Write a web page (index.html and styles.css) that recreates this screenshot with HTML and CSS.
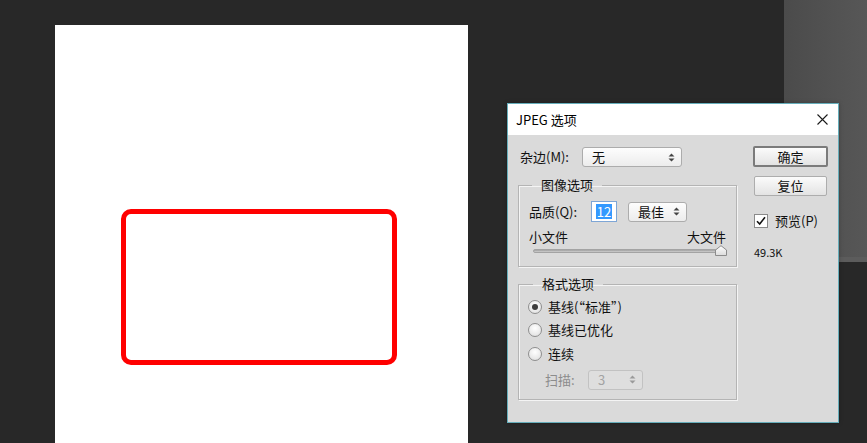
FILE: index.html
```html
<!DOCTYPE html>
<html lang="zh-CN">
<head>
    <meta charset="UTF-8">
    <meta name="viewport" content="width=device-width, initial-scale=1.0">
    <title>JPEG 选项</title>
    <link rel="stylesheet" href="styles.css">
</head>
<body>
    <div class="workspace">
        <div class="canvas">
            <div class="red-box"></div>
        </div>
        <div class="side-panel"></div>
    </div>

    <div class="dialog">
        <div class="titlebar">
            <span class="title">JPEG 选项</span>
            <svg class="close" width="11" height="11" viewBox="0 0 11 11">
                <path d="M0.5 0.5 L10.5 10.5 M10.5 0.5 L0.5 10.5" stroke="#1a1a1a" stroke-width="1.1" fill="none"/>
            </svg>
        </div>
        <div class="dialog-body">
            <div class="left-col">
                <div class="row matte-row">
                    <span class="label matte-label">杂边(M):</span>
                    <div class="select matte-select">
                        <span>无</span>
                        <svg class="arrows" width="7" height="9" viewBox="0 0 7 9">
                            <path d="M0.5 3.5 L3.5 0.5 L6.5 3.5 Z M0.5 5.5 L3.5 8.5 L6.5 5.5 Z" fill="#444"/>
                        </svg>
                    </div>
                </div>

                <fieldset class="group group-image">
                    <legend>图像选项</legend>
                    <div class="row quality-row">
                        <span class="label quality-label">品质(Q):</span>
                        <div class="num-input"><span class="selected">12</span></div>
                        <div class="select quality-select">
                            <span>最佳</span>
                            <svg class="arrows" width="7" height="9" viewBox="0 0 7 9">
                                <path d="M0.5 3.5 L3.5 0.5 L6.5 3.5 Z M0.5 5.5 L3.5 8.5 L6.5 5.5 Z" fill="#444"/>
                            </svg>
                        </div>
                    </div>
                    <div class="size-labels">
                        <span>小文件</span>
                        <span>大文件</span>
                    </div>
                    <div class="slider">
                        <div class="track"></div>
                        <svg class="thumb" width="12" height="11" viewBox="0 0 12 11">
                            <defs>
                                <linearGradient id="thumbFill" x1="0" y1="0" x2="0" y2="1">
                                    <stop offset="0" stop-color="#ffffff"/>
                                    <stop offset="1" stop-color="#dcdcdc"/>
                                </linearGradient>
                            </defs>
                            <path d="M0.5 10.5 V5 L6 0.7 L11.5 5 V10.5 Z" fill="url(#thumbFill)" stroke="#8c8c8c"/>
                        </svg>
                    </div>
                </fieldset>

                <fieldset class="group group-format">
                    <legend>格式选项</legend>
                    <div class="radio-row">
                        <span class="radio checked"></span>
                        <span>基线(“标准”)</span>
                    </div>
                    <div class="radio-row">
                        <span class="radio"></span>
                        <span>基线已优化</span>
                    </div>
                    <div class="radio-row">
                        <span class="radio"></span>
                        <span>连续</span>
                    </div>
                    <div class="row scan-row">
                        <span class="label scan-label">扫描:</span>
                        <div class="select scan-select">
                            <span>3</span>
                            <svg class="arrows" width="7" height="9" viewBox="0 0 7 9">
                                <path d="M0.5 3.5 L3.5 0.5 L6.5 3.5 Z M0.5 5.5 L3.5 8.5 L6.5 5.5 Z" fill="#9a9a9a"/>
                            </svg>
                        </div>
                    </div>
                </fieldset>
            </div>

            <div class="right-col">
                <button class="btn btn-default">确定</button>
                <button class="btn">复位</button>
                <div class="check-row">
                    <svg class="checkbox" width="14" height="14" viewBox="0 0 14 14">
                        <rect x="0.5" y="0.5" width="13" height="13" fill="#fff" stroke="#8a8a8a"/>
                        <path d="M3 7.2 L5.7 10 L11 3.2" stroke="#111" stroke-width="1.6" fill="none"/>
                    </svg>
                    <span>预览(P)</span>
                </div>
                <div class="file-size">49.3K</div>
            </div>
        </div>
    </div>
</body>
</html>
```

FILE: styles.css
```css
/* Basic reset */
* {
    box-sizing: border-box;
    margin: 0;
    padding: 0;
}

body {
    background: #282828;
    font-family: "Noto Sans CJK SC", "Noto Sans", sans-serif;
    font-size: 13px;
    color: #111;
    height: 443px;
    overflow: hidden;
}

/* Photoshop workspace */
.workspace {
    display: flex;
    align-items: flex-start;
    height: 443px;
    padding: 25px 0 0 55px;
}

.canvas {
    width: 413px;
    height: 418px;
    background: #fff;
    padding: 184px 0 0 66px;
}

.red-box {
    width: 276px;
    height: 156px;
    border: 5px solid #ff0000;
    border-radius: 10px;
}

.side-panel {
    margin-left: auto;
    margin-top: -25px;
    width: 83px;
    height: 262px;
    background: linear-gradient(to right, #4b4b4b, #575757);
    border-bottom: 5px solid #5c5c5c;
}

/* Dialog window */
.dialog {
    position: absolute;
    left: 507px;
    top: 103px;
    width: 332px;
    height: 320px;
    background: #dadada;
    border: 1px solid #66aebb;
    box-shadow: 0 0 4px rgba(0, 0, 0, 0.25);
}

.titlebar {
    height: 31px;
    background: #fff;
    display: flex;
    align-items: center;
    justify-content: space-between;
    padding: 0 10px 0 8px;
}

.title {
    font-size: 13px;
    color: #000;
}

.dialog-body {
    display: flex;
    padding-left: 10px;
}

.left-col {
    width: 219px;
}

.right-col {
    width: 75px;
    margin-left: 16px;
    display: flex;
    flex-direction: column;
}

.row {
    display: flex;
    align-items: center;
}

.label {
    line-height: 16px;
}

.matte-row {
    margin-top: 12px;
    padding-left: 2px;
}

.matte-label {
    width: 62px;
}

/* Dropdowns */
.select {
    height: 20px;
    display: flex;
    align-items: center;
    justify-content: space-between;
    background: linear-gradient(#fdfdfd, #ececec);
    border: 1px solid #acacac;
    border-radius: 3px;
    padding: 0 6px 0 9px;
    line-height: 16px;
}

.matte-select {
    width: 100px;
}

.quality-select {
    width: 59px;
    margin-left: 11px;
}

.scan-select {
    width: 55px;
    color: #a3a3a3;
    background: #dedede;
    border-color: #c2c2c2;
}

/* Group boxes */
.group {
    border: 1px solid #b4b4b4;
    border-radius: 0;
    box-shadow: 1px 1px 0 #f4f4f4, inset 1px 1px 0 #f4f4f4;
}

.group legend {
    padding: 0 9px;
    line-height: 16px;
    font-size: 13px;
}

.group-image {
    margin-top: 10px;
    height: 90px;
    padding: 0 10px 0 10px;
}

.group-image legend {
    margin-left: 3px;
}

.group-format {
    margin-top: 9px;
    height: 124px;
    padding: 1px 10px 0 9px;
}

.group-format legend {
    margin-left: 5px;
}

.quality-row {
    margin-top: 8px;
}

.quality-label {
    width: 62px;
}

.num-input {
    width: 26px;
    height: 21px;
    display: flex;
    align-items: center;
    justify-content: center;
    background: #fff;
    border: 1px solid #7ea6d6;
    line-height: 15px;
}

.num-input .selected {
    background: #3399ff;
    color: #fff;
    padding: 0 1px;
}

.size-labels {
    display: flex;
    justify-content: space-between;
    line-height: 16px;
    margin-top: 7px;
}

/* Quality slider */
.slider {
    position: relative;
    height: 12px;
    margin: 0 -1px 0 4px;
}

.track {
    position: absolute;
    left: 0;
    right: 0;
    top: 4px;
    height: 4px;
    background: linear-gradient(#9e9e9e, #cfcfcf);
    border: 1px solid #a3a3a3;
    border-radius: 2px;
}

.thumb {
    position: absolute;
    right: 0;
    top: 0;
}

/* Radio buttons */
.radio-row {
    display: flex;
    align-items: center;
    height: 23.5px;
    line-height: 16px;
}

.radio-row:first-of-type {
    margin-top: 2px;
}

.radio {
    width: 14px;
    height: 14px;
    border-radius: 50%;
    border: 1px solid #8e8e8e;
    background: radial-gradient(circle at 50% 35%, #ffffff, #dcdcdc);
    margin-right: 6px;
    display: flex;
    align-items: center;
    justify-content: center;
}

.radio.checked::after {
    content: "";
    width: 6px;
    height: 6px;
    border-radius: 50%;
    background: #3c3c3c;
}

.scan-row {
    margin-top: 4px;
    padding-left: 17px;
}

.scan-label {
    width: 43px;
    color: #8c8c8c;
}

/* Buttons */
.btn {
    font-family: inherit;
    font-size: 13px;
    color: #111;
    height: 20px;
    line-height: 16px;
    background: linear-gradient(#fbfbfb, #e3e3e3);
    border: 1px solid #adadad;
    border-radius: 2px;
}

.btn-default {
    height: 21px;
    margin-top: 11px;
    border: 2px solid #7b7b7b;
}

.btn + .btn {
    margin-top: 9px;
    width: 73px;
    margin-left: 1px;
}

.check-row {
    display: flex;
    align-items: center;
    margin-top: 17px;
    margin-left: 1px;
    line-height: 16px;
}

.checkbox {
    margin-right: 7px;
}

.file-size {
    margin-top: 15px;
    font-size: 11px;
    line-height: 16px;
    margin-left: 1px;
}
```
